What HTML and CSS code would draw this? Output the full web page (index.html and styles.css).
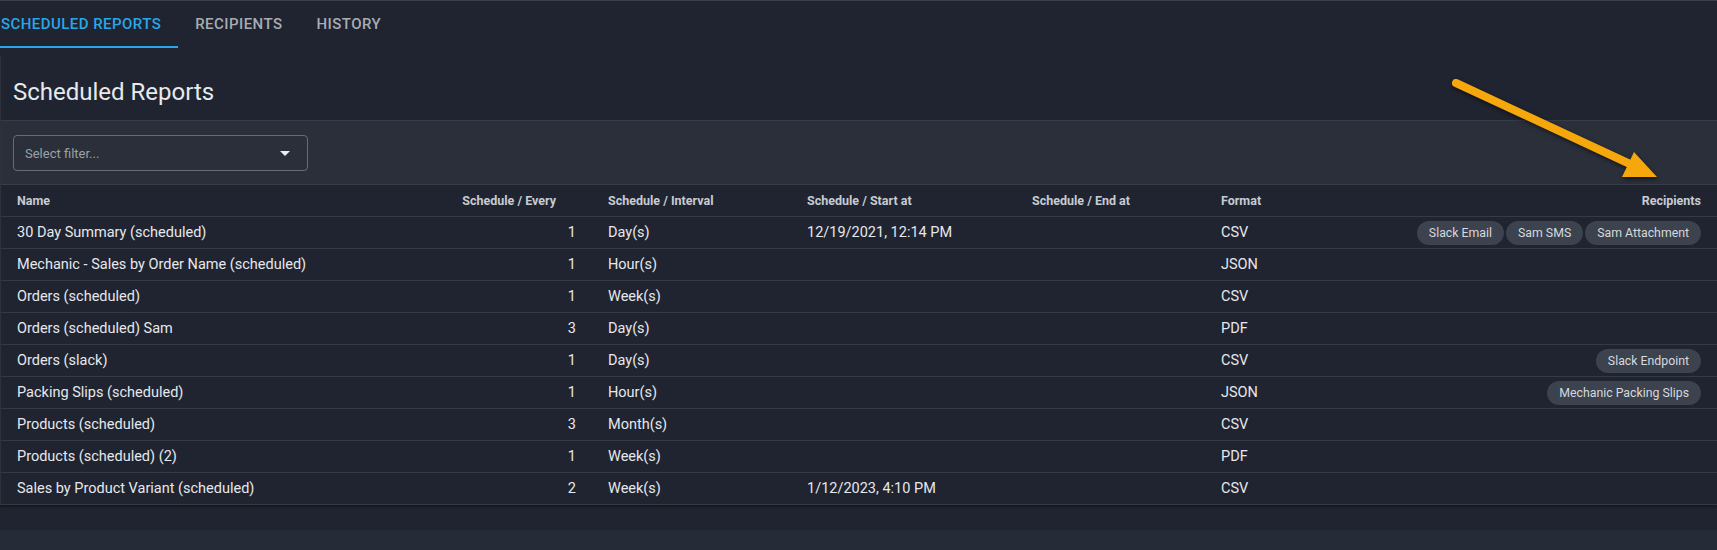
FILE: index.html
```html
<!DOCTYPE html>
<html lang="en">
<head>
  <meta charset="UTF-8" />
  <meta name="viewport" content="width=device-width, initial-scale=1.0"/>
  <title>Scheduled Reports</title>
  <link rel="stylesheet" href="styles.css">
</head>
<body>
  <div class="tabs">
    <a href="#" class="tab active">Scheduled Reports</a>
    <a href="#" class="tab">Recipients</a>
    <a href="#" class="tab">History</a>
  </div>

  <div class="panel">
    <h1 class="panel-title">Scheduled Reports</h1>

    <div class="filter-bar">
      <div class="filter-select">
        <span class="placeholder">Select filter...</span>
        <span class="caret"></span>
      </div>
    </div>

    <table class="report-table">
      <colgroup>
        <col style="width: 399px">
        <col style="width: 192px">
        <col style="width: 199px">
        <col style="width: 225px">
        <col style="width: 189px">
        <col style="width: 150px">
        <col>
      </colgroup>
      <thead>
        <tr>
          <th>Name</th>
          <th class="num">Schedule / Every</th>
          <th>Schedule / Interval</th>
          <th>Schedule / Start at</th>
          <th>Schedule / End at</th>
          <th>Format</th>
          <th class="right">Recipients</th>
        </tr>
      </thead>
      <tbody>
        <tr>
          <td>30 Day Summary (scheduled)</td>
          <td class="num">1</td>
          <td>Day(s)</td>
          <td>12/19/2021, 12:14 PM</td>
          <td></td>
          <td>CSV</td>
          <td class="right">
            <span class="chip">Slack Email</span><span class="chip">Sam SMS</span><span class="chip">Sam Attachment</span>
          </td>
        </tr>
        <tr>
          <td>Mechanic - Sales by Order Name (scheduled)</td>
          <td class="num">1</td>
          <td>Hour(s)</td>
          <td></td>
          <td></td>
          <td>JSON</td>
          <td class="right"></td>
        </tr>
        <tr>
          <td>Orders (scheduled)</td>
          <td class="num">1</td>
          <td>Week(s)</td>
          <td></td>
          <td></td>
          <td>CSV</td>
          <td class="right"></td>
        </tr>
        <tr>
          <td>Orders (scheduled) Sam</td>
          <td class="num">3</td>
          <td>Day(s)</td>
          <td></td>
          <td></td>
          <td>PDF</td>
          <td class="right"></td>
        </tr>
        <tr>
          <td>Orders (slack)</td>
          <td class="num">1</td>
          <td>Day(s)</td>
          <td></td>
          <td></td>
          <td>CSV</td>
          <td class="right"><span class="chip">Slack Endpoint</span></td>
        </tr>
        <tr>
          <td>Packing Slips (scheduled)</td>
          <td class="num">1</td>
          <td>Hour(s)</td>
          <td></td>
          <td></td>
          <td>JSON</td>
          <td class="right"><span class="chip">Mechanic Packing Slips</span></td>
        </tr>
        <tr>
          <td>Products (scheduled)</td>
          <td class="num">3</td>
          <td>Month(s)</td>
          <td></td>
          <td></td>
          <td>CSV</td>
          <td class="right"></td>
        </tr>
        <tr>
          <td>Products (scheduled) (2)</td>
          <td class="num">1</td>
          <td>Week(s)</td>
          <td></td>
          <td></td>
          <td>PDF</td>
          <td class="right"></td>
        </tr>
        <tr>
          <td>Sales by Product Variant (scheduled)</td>
          <td class="num">2</td>
          <td>Week(s)</td>
          <td>1/12/2023, 4:10 PM</td>
          <td></td>
          <td>CSV</td>
          <td class="right"></td>
        </tr>
      </tbody>
    </table>
  </div>

  <div class="footer-strip"></div>

  <!-- annotation arrow pointing at the Recipients column -->
  <svg class="callout-arrow" width="240" height="130" viewBox="1440 60 240 130">
    <line x1="1456" y1="83" x2="1630" y2="164" stroke="#f5a70b" stroke-width="8" stroke-linecap="round"/>
    <polygon points="1634,152 1622,177 1657,177" fill="#f5a70b"/>
  </svg>
</body>
</html>
```

FILE: styles.css
```css
body {
    margin: 0;
    padding: 0;
    background-color: #1f2430;
    color: #e3e5e9;
    font-family: Roboto, "Liberation Sans", sans-serif;
    position: relative;
    height: 550px;
    overflow: hidden;
}

/* タブ */
.tabs {
    display: flex;
    border-top: 1px solid #3b404a;
    height: 47px;
    margin-left: -16px;
}

.tab {
    display: flex;
    align-items: center;
    padding: 0 17px;
    font-size: 15px;
    font-weight: 500;
    letter-spacing: 0.03em;
    text-transform: uppercase;
    text-decoration: none;
    color: #a8acb3;
    border-bottom: 2px solid transparent;
    box-sizing: border-box;
}

.tab.active {
    color: #29a6e8;
    border-bottom-color: #29a6e8;
}

/* パネル */
.panel {
    margin-top: 8px;
    border-left: 1px solid #2c313c;
    box-shadow: 0 2px 2px rgba(0, 0, 0, 0.35);
}

.panel-title {
    margin: 0;
    padding: 21px 12px 13px;
    font-size: 24px;
    font-weight: 400;
    line-height: 30px;
    color: #e7e9ec;
}

.filter-bar {
    background-color: #2a2f3a;
    border-top: 1px solid #373c47;
    border-bottom: 1px solid #373c47;
    padding: 14px 12px 13px;
}

.filter-select {
    width: 295px;
    height: 36px;
    box-sizing: border-box;
    border: 1px solid #676b74;
    border-radius: 4px;
    display: flex;
    align-items: center;
    justify-content: space-between;
    padding: 0 17px 0 11px;
}

.placeholder {
    font-size: 13px;
    color: #9ca0a7;
}

.caret {
    width: 0;
    height: 0;
    border-left: 5px solid transparent;
    border-right: 5px solid transparent;
    border-top: 5px solid #eceef0;
}

/* テーブル */
.report-table {
    width: 100%;
    border-collapse: collapse;
    table-layout: fixed;
}

.report-table th,
.report-table td {
    text-align: left;
    padding: 0 16px;
    border-bottom: 1px solid #353a45;
    white-space: nowrap;
    overflow: hidden;
}

.report-table th {
    height: 31px;
    font-size: 12.5px;
    font-weight: 700;
    color: #c7cbd2;
}

.report-table td {
    height: 31px;
    font-size: 14.5px;
    color: #e6e8ec;
}

.report-table .num {
    text-align: right;
}

.report-table th.num {
    padding-right: 36px;
}

.report-table .right {
    text-align: right;
}

.chip {
    display: inline-block;
    height: 24px;
    line-height: 24px;
    padding: 0 12px;
    margin-left: 2px;
    border-radius: 12px;
    background-color: #3c424e;
    color: #d6d9de;
    font-size: 12.3px;
    vertical-align: middle;
}

.footer-strip {
    margin-top: 25px;
    height: 40px;
    background-color: #262c37;
}

/* 注釈の矢印 */
.callout-arrow {
    position: absolute;
    left: 1440px;
    top: 60px;
    filter: drop-shadow(1px 2px 2px rgba(0, 0, 0, 0.55));
}
```
